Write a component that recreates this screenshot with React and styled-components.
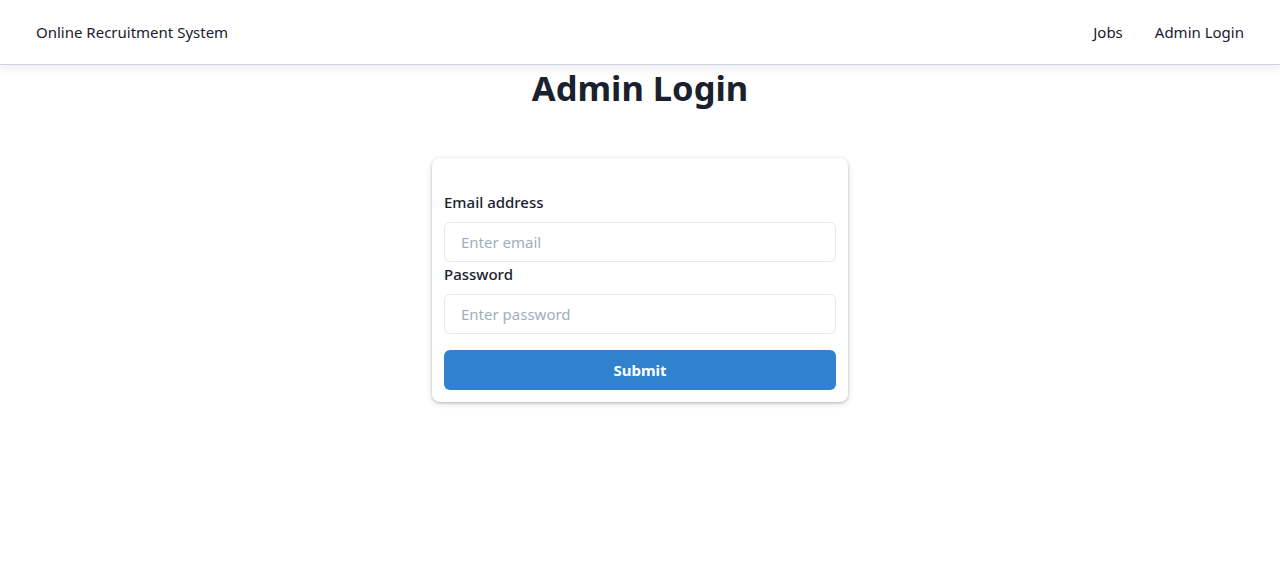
import React from 'react';
import styled, { createGlobalStyle } from 'styled-components';

const GlobalStyle = createGlobalStyle`
  * { box-sizing: border-box; }
  body {
    margin: 0;
    font-family: "Noto Sans", "Open Sans", sans-serif;
    font-size: 15px;
    color: #1a202c;
    background: #fff;
  }
`;

const Page = styled.div`
  min-height: 100vh;
`;

const NavBar = styled.nav`
  height: 65px;
  display: flex;
  align-items: center;
  justify-content: space-between;
  padding: 0 36px;
  border-bottom: 1px solid #cbd5e0;
  box-shadow: 0 4px 10px rgba(0, 0, 0, 0.07);
`;

const Brand = styled.span`
  color: #1a202c;
`;

const NavLinks = styled.div`
  display: flex;
  gap: 32px;
`;

const NavLink = styled.a`
  color: #1a202c;
  text-decoration: none;
  cursor: pointer;
`;

const Main = styled.main`
  display: flex;
  flex-direction: column;
  align-items: center;
  padding-bottom: 40px;
`;

const Title = styled.h1`
  margin: 2px 0 49px;
  font-size: 34.5px;
  font-weight: 700;
  line-height: 42px;
`;

const Card = styled.form`
  width: 416px;
  padding: 32px 12px 12px;
  border-radius: 8px;
  background: #fff;
  box-shadow: 0 1px 3px rgba(0, 0, 0, 0.2), 0 2px 6px rgba(0, 0, 0, 0.12);
  display: flex;
  flex-direction: column;
`;

const Field = styled.div`
  display: flex;
  flex-direction: column;
`;

const Label = styled.label`
  font-weight: 500;
  line-height: 24px;
  margin-bottom: 8px;
`;

const Input = styled.input`
  height: 40px;
  padding: 0 16px;
  border: 1px solid #e2e8f0;
  border-radius: 6px;
  font: inherit;
  color: #1a202c;
  outline: none;
  &::placeholder { color: #a0aec0; }
`;

const Submit = styled.button`
  margin-top: 16px;
  height: 40px;
  border: none;
  border-radius: 6px;
  background: #3182ce;
  color: #fff;
  font: inherit;
  font-weight: 700;
  cursor: pointer;
`;

export default function App() {
  return (
    <Page>
      <GlobalStyle />
      <NavBar>
        <Brand>Online Recruitment System</Brand>
        <NavLinks>
          <NavLink>Jobs</NavLink>
          <NavLink>Admin Login</NavLink>
        </NavLinks>
      </NavBar>
      <Main>
        <Title>Admin Login</Title>
        <Card onSubmit={(e) => e.preventDefault()}>
          <Field>
            <Label htmlFor="email">Email address</Label>
            <Input id="email" type="email" placeholder="Enter email" />
          </Field>
          <Field>
            <Label htmlFor="password">Password</Label>
            <Input id="password" type="password" placeholder="Enter password" />
          </Field>
          <Submit type="submit">Submit</Submit>
        </Card>
      </Main>
    </Page>
  );
}
